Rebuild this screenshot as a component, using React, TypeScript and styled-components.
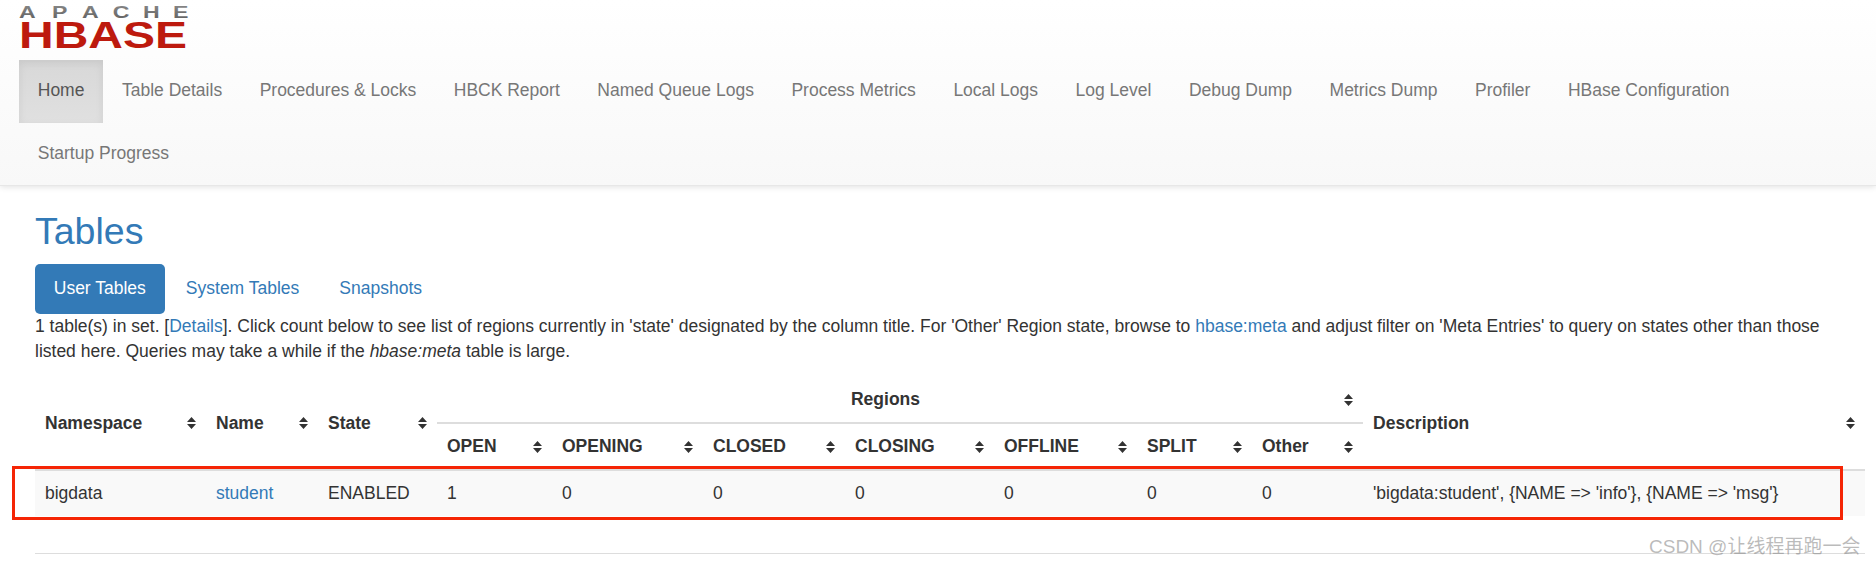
import styled, { createGlobalStyle } from "styled-components";

const GlobalStyle = createGlobalStyle`
  html, body {
    margin: 0;
    padding: 0;
    background: #fff;
  }
  body {
    font-family: "Liberation Sans", Arial, sans-serif;
    font-size: 17.5px;
    line-height: 25px;
    color: #333;
  }
`;

const navItems = [
  "Home",
  "Table Details",
  "Procedures & Locks",
  "HBCK Report",
  "Named Queue Logs",
  "Process Metrics",
  "Local Logs",
  "Log Level",
  "Debug Dump",
  "Metrics Dump",
  "Profiler",
  "HBase Configuration",
  "Startup Progress",
];

const tabs = ["User Tables", "System Tables", "Snapshots"];
const regionStates = ["OPEN", "OPENING", "CLOSED", "CLOSING", "OFFLINE", "SPLIT", "Other"];
const regionCounts = ["1", "0", "0", "0", "0", "0", "0"];
const colWidths = [171, 112, 119, 115, 151, 142, 149, 143, 115, 111, 502];

const Logo = () => (
  <LogoSvg viewBox="0 0 180 60" width="180" height="60">
    <defs>
      <linearGradient id="apacheFill" x1="0" y1="0" x2="0" y2="1">
        <stop offset="0" stopColor="#8a8a8a" />
        <stop offset="1" stopColor="#5c5c5c" />
      </linearGradient>
    </defs>
    <g transform="scale(1.4 1)">
      <text
        x="0 23.5 45 67 88.5 110"
        y="18.5"
        fill="url(#apacheFill)"
        fontFamily="Liberation Sans"
        fontWeight="700"
        fontSize="16.5"
      >
        APACHE
      </text>
    </g>
    <text
      x="0"
      y="48"
      fill="#bd1a0e"
      fontFamily="Liberation Sans"
      fontWeight="700"
      fontSize="36"
      textLength="168"
      lengthAdjust="spacingAndGlyphs"
    >
      HBASE
    </text>
  </LogoSvg>
);

const SortIcon = () => (
  <SortSvg viewBox="0 0 9 12" width="9" height="12">
    <path d="M4.5 0 L9 5 L0 5 Z M4.5 12 L0 7 L9 7 Z" fill="#333" />
  </SortSvg>
);

const HeadLabel = ({ children, center }: { children: string; center?: boolean }) => (
  <HeadInner $center={center}>
    <span>{children}</span>
    <SortIcon />
  </HeadInner>
);

const App = () => {
  return (
    <Page>
      <GlobalStyle />
      <Navbar>
        <Logo />
        <NavList>
          {navItems.map((item, i) => (
            <NavLink key={item} $active={i === 0}>
              {item}
            </NavLink>
          ))}
        </NavList>
      </Navbar>

      <Main>
        <Title>Tables</Title>
        <TabList>
          {tabs.map((tab, i) => (
            <Tab key={tab} $active={i === 0}>
              {tab}
            </Tab>
          ))}
        </TabList>
        <Intro>
          1 table(s) in set. [<A>Details</A>]. Click count below to see list of regions currently in 'state'
          designated by the column title. For 'Other' Region state, browse to <A>hbase:meta</A> and adjust filter on
          'Meta Entries' to query on states other than those listed here. Queries may take a while if the{" "}
          <em>hbase:meta</em> table is large.
        </Intro>

        <Table>
          <colgroup>
            {colWidths.map((w, i) => (
              <col key={i} width={w} />
            ))}
          </colgroup>
          <thead>
            <tr>
              <Th rowSpan={2}><HeadLabel>Namespace</HeadLabel></Th>
              <Th rowSpan={2}><HeadLabel>Name</HeadLabel></Th>
              <Th rowSpan={2}><HeadLabel>State</HeadLabel></Th>
              <GroupTh colSpan={7}><HeadLabel center>Regions</HeadLabel></GroupTh>
              <Th rowSpan={2}><HeadLabel>Description</HeadLabel></Th>
            </tr>
            <tr>
              {regionStates.map((s) => (
                <Th key={s}><HeadLabel>{s}</HeadLabel></Th>
              ))}
            </tr>
          </thead>
          <tbody>
            <tr>
              <Td>bigdata</Td>
              <Td><A>student</A></Td>
              <Td>ENABLED</Td>
              {regionCounts.map((c, i) => (
                <Td key={i}>{c}</Td>
              ))}
              <Td>'bigdata:student', {"{NAME => 'info'}"}, {"{NAME => 'msg'}"}</Td>
            </tr>
          </tbody>
        </Table>
        <Rule />
      </Main>

      <Highlight />
      <Watermark>CSDN @让线程再跑一会</Watermark>
    </Page>
  );
};

export default App;

const Page = styled.div`
  position: relative;
  width: 1876px;
  height: 566px;
  overflow: hidden;
`;

const Navbar = styled.header`
  background: linear-gradient(to bottom, #fff 0%, #f8f8f8 100%);
  box-shadow: 0 1px 6px rgba(0, 0, 0, 0.12);
  border-bottom: 1px solid #e7e7e7;
  height: 186px;
  box-sizing: border-box;
  padding: 0 19px;
`;

const LogoSvg = styled.svg`
  display: block;
`;

const NavList = styled.nav`
  display: flex;
  flex-wrap: wrap;
`;

const NavLink = styled.a<{ $active?: boolean }>`
  display: block;
  padding: 18.25px 18.75px;
  height: 62.5px;
  box-sizing: border-box;
  color: ${(p) => (p.$active ? "#555" : "#777")};
  background: ${(p) => (p.$active ? "linear-gradient(to bottom, #d8d8d8 0%, #e0e0e0 100%)" : "none")};
  box-shadow: ${(p) => (p.$active ? "inset 0 3px 9px rgba(0, 0, 0, 0.075)" : "none")};
`;

const Main = styled.main`
  padding: 21px 11px 0 35px;
`;

const Title = styled.h1`
  margin: 0 0 7px;
  font-size: 37.5px;
  font-weight: 400;
  line-height: 49.5px;
  color: #337ab7;
`;

const TabList = styled.div`
  display: flex;
  gap: 2.5px;
`;

const Tab = styled.a<{ $active?: boolean }>`
  display: block;
  padding: 12.5px 18.75px;
  border-radius: 5px;
  color: ${(p) => (p.$active ? "#fff" : "#337ab7")};
  background: ${(p) => (p.$active ? "#337ab7" : "transparent")};
`;

const Intro = styled.p`
  margin: 0 0 13.5px;
`;

const A = styled.a`
  color: #337ab7;
`;

const Table = styled.table`
  width: 1830px;
  table-layout: fixed;
  border-collapse: collapse;
`;

const Th = styled.th`
  padding: 10px;
  text-align: left;
  vertical-align: middle;
  font-weight: 700;
  color: #333;
  border-bottom: 2.5px solid #ddd;
`;

const GroupTh = styled(Th)`
  text-align: center;
`;

const HeadInner = styled.div<{ $center?: boolean }>`
  display: flex;
  align-items: center;
  justify-content: space-between;

  > span {
    flex: ${(p) => (p.$center ? "1" : "0 1 auto")};
    text-align: ${(p) => (p.$center ? "center" : "left")};
    padding-right: ${(p) => (p.$center ? "20px" : "0")};
    white-space: nowrap;
  }
`;

const SortSvg = styled.svg`
  flex: none;
  display: block;
`;

const Td = styled.td`
  padding: 10px;
  height: 45px;
  box-sizing: border-box;
  background: #f9f9f9;
  white-space: nowrap;
`;

const Rule = styled.hr`
  margin: 37px 0 0;
  border: 0;
  border-top: 1.25px solid #ddd;
`;

const Highlight = styled.div`
  position: absolute;
  left: 12px;
  top: 466px;
  width: 1831px;
  height: 54px;
  box-sizing: border-box;
  border: 3px solid #f52505;
`;

const Watermark = styled.div`
  position: absolute;
  left: 1649px;
  top: 534px;
  font-family: "Liberation Sans", "Noto Sans CJK SC", sans-serif;
  font-size: 19px;
  line-height: 25px;
  color: rgba(120, 120, 120, 0.5);
  white-space: nowrap;
`;
